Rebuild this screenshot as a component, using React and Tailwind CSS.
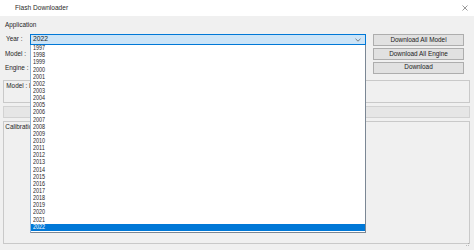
import React from "react";

const years = Array.from({ length: 26 }, (_, i) => 1997 + i);

function Chevron() {
  return (
    <svg width="6" height="4" viewBox="0 0 6 4" className="block">
      <path d="M0.5 0.8 L3 3.2 L5.5 0.8" fill="none" stroke="#606060" strokeWidth="0.8" />
    </svg>
  );
}

function CloseX() {
  return (
    <svg width="6" height="6" viewBox="0 0 6 6" className="block">
      <path d="M0.5 0.5 L5.5 5.5 M5.5 0.5 L0.5 5.5" fill="none" stroke="#555" strokeWidth="0.6" />
    </svg>
  );
}

function Btn({ children }) {
  return (
    <div className="h-[11.8px] border border-[#adadad] bg-[#e1e1e1] flex items-center justify-center text-[#1a1a1a]">
      {children}
    </div>
  );
}

export default function App() {
  return (
    <div className="relative w-[474px] h-[250px] overflow-hidden bg-[#f0f0f0] font-['Liberation_Sans',Arial,sans-serif] text-[6.4px] leading-none text-[#1f1f1f]">
      {/* title bar */}
      <div className="h-[16px] bg-white flex items-center justify-between pl-[15px] pr-[6px]">
        <span className="text-[6.6px] text-[#2b2b2b]">Flash Downloader</span>
        <CloseX />
      </div>

      {/* Application caption */}
      <div className="h-[18px] flex items-center pl-[5px]">Application</div>

      {/* form rows */}
      <div className="flex">
        <div className="w-[373px] flex flex-col gap-[3.5px]">
          <div className="h-[11px] flex items-center">
            <span className="w-[30px] pl-[6px]">Year :</span>
            <div className="w-[335.5px] h-[11px] border border-[#0078d7] bg-[#cce4f7] flex items-center justify-between pl-[2px] pr-[4px]">
              <span className="text-[6.8px]">2022</span>
              <Chevron />
            </div>
          </div>
          <div className="h-[11px] flex items-center">
            <span className="w-[30px] pl-[5px]">Model :</span>
            <div className="w-[335.5px] h-[11px] border border-[#7a7a7a] bg-white" />
          </div>
          <div className="h-[11px] flex items-center">
            <span className="w-[30px] pl-[5px]">Engine :</span>
            <div className="w-[335.5px] h-[11px] border border-[#7a7a7a] bg-white" />
          </div>
        </div>
        <div className="w-[91px] flex flex-col gap-[2.1px]">
          <Btn>Download All Model</Btn>
          <Btn>Download All Engine</Btn>
          <Btn>Download</Btn>
        </div>
      </div>

      {/* Model group */}
      <div className="ml-[3.3px] mt-[5.8px] w-[467px] h-[23.5px] border border-[#c9c9c9] pt-[2px] pl-[2px]">
        <span className="block w-[24.5px] overflow-hidden whitespace-nowrap">Model : Loading</span>
      </div>

      {/* gray bar */}
      <div className="ml-[3.3px] mt-[3px] w-[467px] h-[11.5px] border border-[#d2d2d2] bg-[#e6e6e6]" />

      {/* calibration group */}
      <div className="ml-[3.3px] mt-[3.5px] w-[467px] h-[123px] border border-[#c9c9c9]">
        <span className="block w-[25.5px] overflow-hidden whitespace-nowrap pl-[1px] pt-[1.5px]">Calibration</span>
      </div>

      {/* resize grip */}
      <div className="absolute right-[5px] bottom-[4px] grid grid-cols-2 gap-[1px] opacity-60">
        <span className="w-[1px] h-[1px]" />
        <span className="w-[1px] h-[1px] bg-[#999]" />
        <span className="w-[1px] h-[1px] bg-[#999]" />
        <span className="w-[1px] h-[1px] bg-[#999]" />
      </div>

      {/* open dropdown list */}
      <div className="absolute left-[30px] top-[45px] w-[335.5px] h-[188px] bg-white border border-t-0 border-l-[#8fb6dd] border-r-[#7b8794] border-b-[#7b8794] flex flex-col">
        {years.map((y) => (
          <div
            key={y}
            className={
              y === 2022
                ? "h-[7.15px] flex items-center pl-[1.5px] bg-[#0078d7] text-white"
                : "h-[7.15px] flex items-center pl-[1.5px]"
            }
          >
            <span className="inline-block origin-left scale-x-[0.8] text-[6.8px]">{y}</span>
          </div>
        ))}
      </div>
    </div>
  );
}
